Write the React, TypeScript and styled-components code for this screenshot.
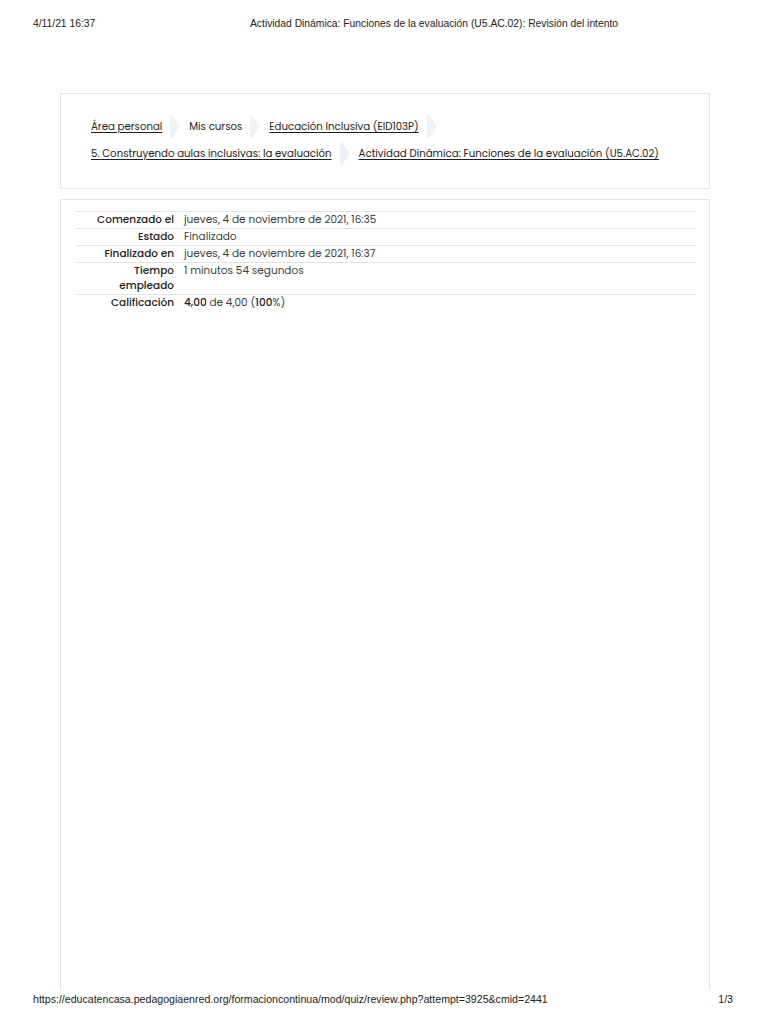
import styled, {createGlobalStyle} from 'styled-components';

const GlobalStyle = createGlobalStyle`
	html, body {
		margin:0;
		padding:0;
		background:#fff;
	}
	body {
		font-family:"Liberation Sans", Arial, sans-serif;
	}
`;

const Page = styled.div`
	width:768px;
	height:1024px;
	display:flex;
	flex-direction:column;
	overflow:hidden;
`;

const PrintBar = styled.div`
	display:flex;
	align-items:center;
	height:14px;
	padding:16px 0 0 33px;
	font-size:10.3px;
	color:#222;
`;

const PrintDate = styled.span`
	width:217px;
`;

const PrintTitle = styled.span`
	flex:1;
`;

const Spacer = styled.div<{size:number}>`
	height:${props => props.size}px;
	flex:none;
`;

const Panel = styled.div<{grow?:boolean}>`
	margin-left:60px;
	width:650px;
	border:1px solid #e2e6ea;
	border-bottom:${props => props.grow ? 'none' : '1px solid #e2e6ea'};
	box-sizing:border-box;
	font-family:Poppins, "Open Sans", sans-serif;
	color:#1d2125;
	${props => props.grow ? 'flex:1;' : ''}
`;

const Breadcrumb = styled.div`
	display:flex;
	flex-wrap:wrap;
	align-content:flex-start;
	row-gap:4px;
	padding:21px 0 0 30px;
	height:94px;
	box-sizing:border-box;
`;

const Crumb = styled.div`
	display:flex;
	align-items:center;
	height:23px;
	font-size:10.2px;
`;

const CrumbLink = styled.a`
	color:#1d2125;
	text-decoration:underline;
	text-underline-offset:2px;
	text-decoration-thickness:1px;
`;

const CrumbText = styled.span`
	color:#1d2125;
`;

const Chevron = styled.svg`
	width:10px;
	height:23px;
	margin:0 9px 0 8px;
	flex:none;
`;

const Summary = styled.table`
	margin:11px 0 0 15px;
	width:620px;
	table-layout:fixed;
	border-collapse:collapse;
	font-size:10.5px;
`;

const Row = styled.tr`
	border-top:1.5px solid #e2e5e8;
`;

const Label = styled.th`
	width:88px;
	text-align:right;
	vertical-align:top;
	font-weight:500;
	padding:0 10px 1px 10px;
	line-height:15px;
	color:#1d2125;
`;

const Value = styled.td`
	vertical-align:top;
	padding:0 0 1px;
	line-height:15px;
	font-weight:400;
	color:#3a3f44;
`;

const Strong = styled.b`
	font-weight:500;
	color:#1d2125;
`;

const PrintFooter = styled.div`
	display:flex;
	justify-content:space-between;
	height:34px;
	padding:3px 35px 0 33px;
	font-size:10.6px;
	color:#222;
	box-sizing:border-box;
`;

const Sep = () => (
	<Chevron viewBox="0 0 10 23">
		<path d="M0 0 L2 0 L10 11.5 L2 23 L0 23 Z" fill="#edf2f7" />
	</Chevron>
);

const rows: {label:string; value:React.ReactNode}[] = [
	{label:'Comenzado el', value:'jueves, 4 de noviembre de 2021, 16:35'},
	{label:'Estado', value:'Finalizado'},
	{label:'Finalizado en', value:'jueves, 4 de noviembre de 2021, 16:37'},
	{label:'Tiempo empleado', value:'1 minutos 54 segundos'},
	{label:'Calificación', value:<><Strong>4,00</Strong> de 4,00 (<Strong>100</Strong>%)</>},
];

export default function App() {
	return (
		<Page>
			<GlobalStyle />
			<PrintBar>
				<PrintDate>4/11/21 16:37</PrintDate>
				<PrintTitle>Actividad Dinámica: Funciones de la evaluación (U5.AC.02): Revisión del intento</PrintTitle>
			</PrintBar>
			<Spacer size={63} />
			<Panel>
				<Breadcrumb>
					<Crumb><CrumbLink href="#">Área personal</CrumbLink><Sep /></Crumb>
					<Crumb><CrumbText>Mis cursos</CrumbText><Sep /></Crumb>
					<Crumb><CrumbLink href="#">Educación Inclusiva (EID103P)</CrumbLink><Sep /></Crumb>
					<Crumb><CrumbLink href="#">5. Construyendo aulas inclusivas: la evaluación</CrumbLink><Sep /></Crumb>
					<Crumb><CrumbLink href="#">Actividad Dinámica: Funciones de la evaluación (U5.AC.02)</CrumbLink></Crumb>
				</Breadcrumb>
			</Panel>
			<Spacer size={10} />
			<Panel grow>
				<Summary>
					<tbody>
						{rows.map(r => (
							<Row key={r.label}>
								<Label>{r.label}</Label>
								<Value>{r.value}</Value>
							</Row>
						))}
					</tbody>
				</Summary>
			</Panel>
			<PrintFooter>
				<span>https://educatencasa.pedagogiaenred.org/formacioncontinua/mod/quiz/review.php?attempt=3925&amp;cmid=2441</span>
				<span>1/3</span>
			</PrintFooter>
		</Page>
	);
}
